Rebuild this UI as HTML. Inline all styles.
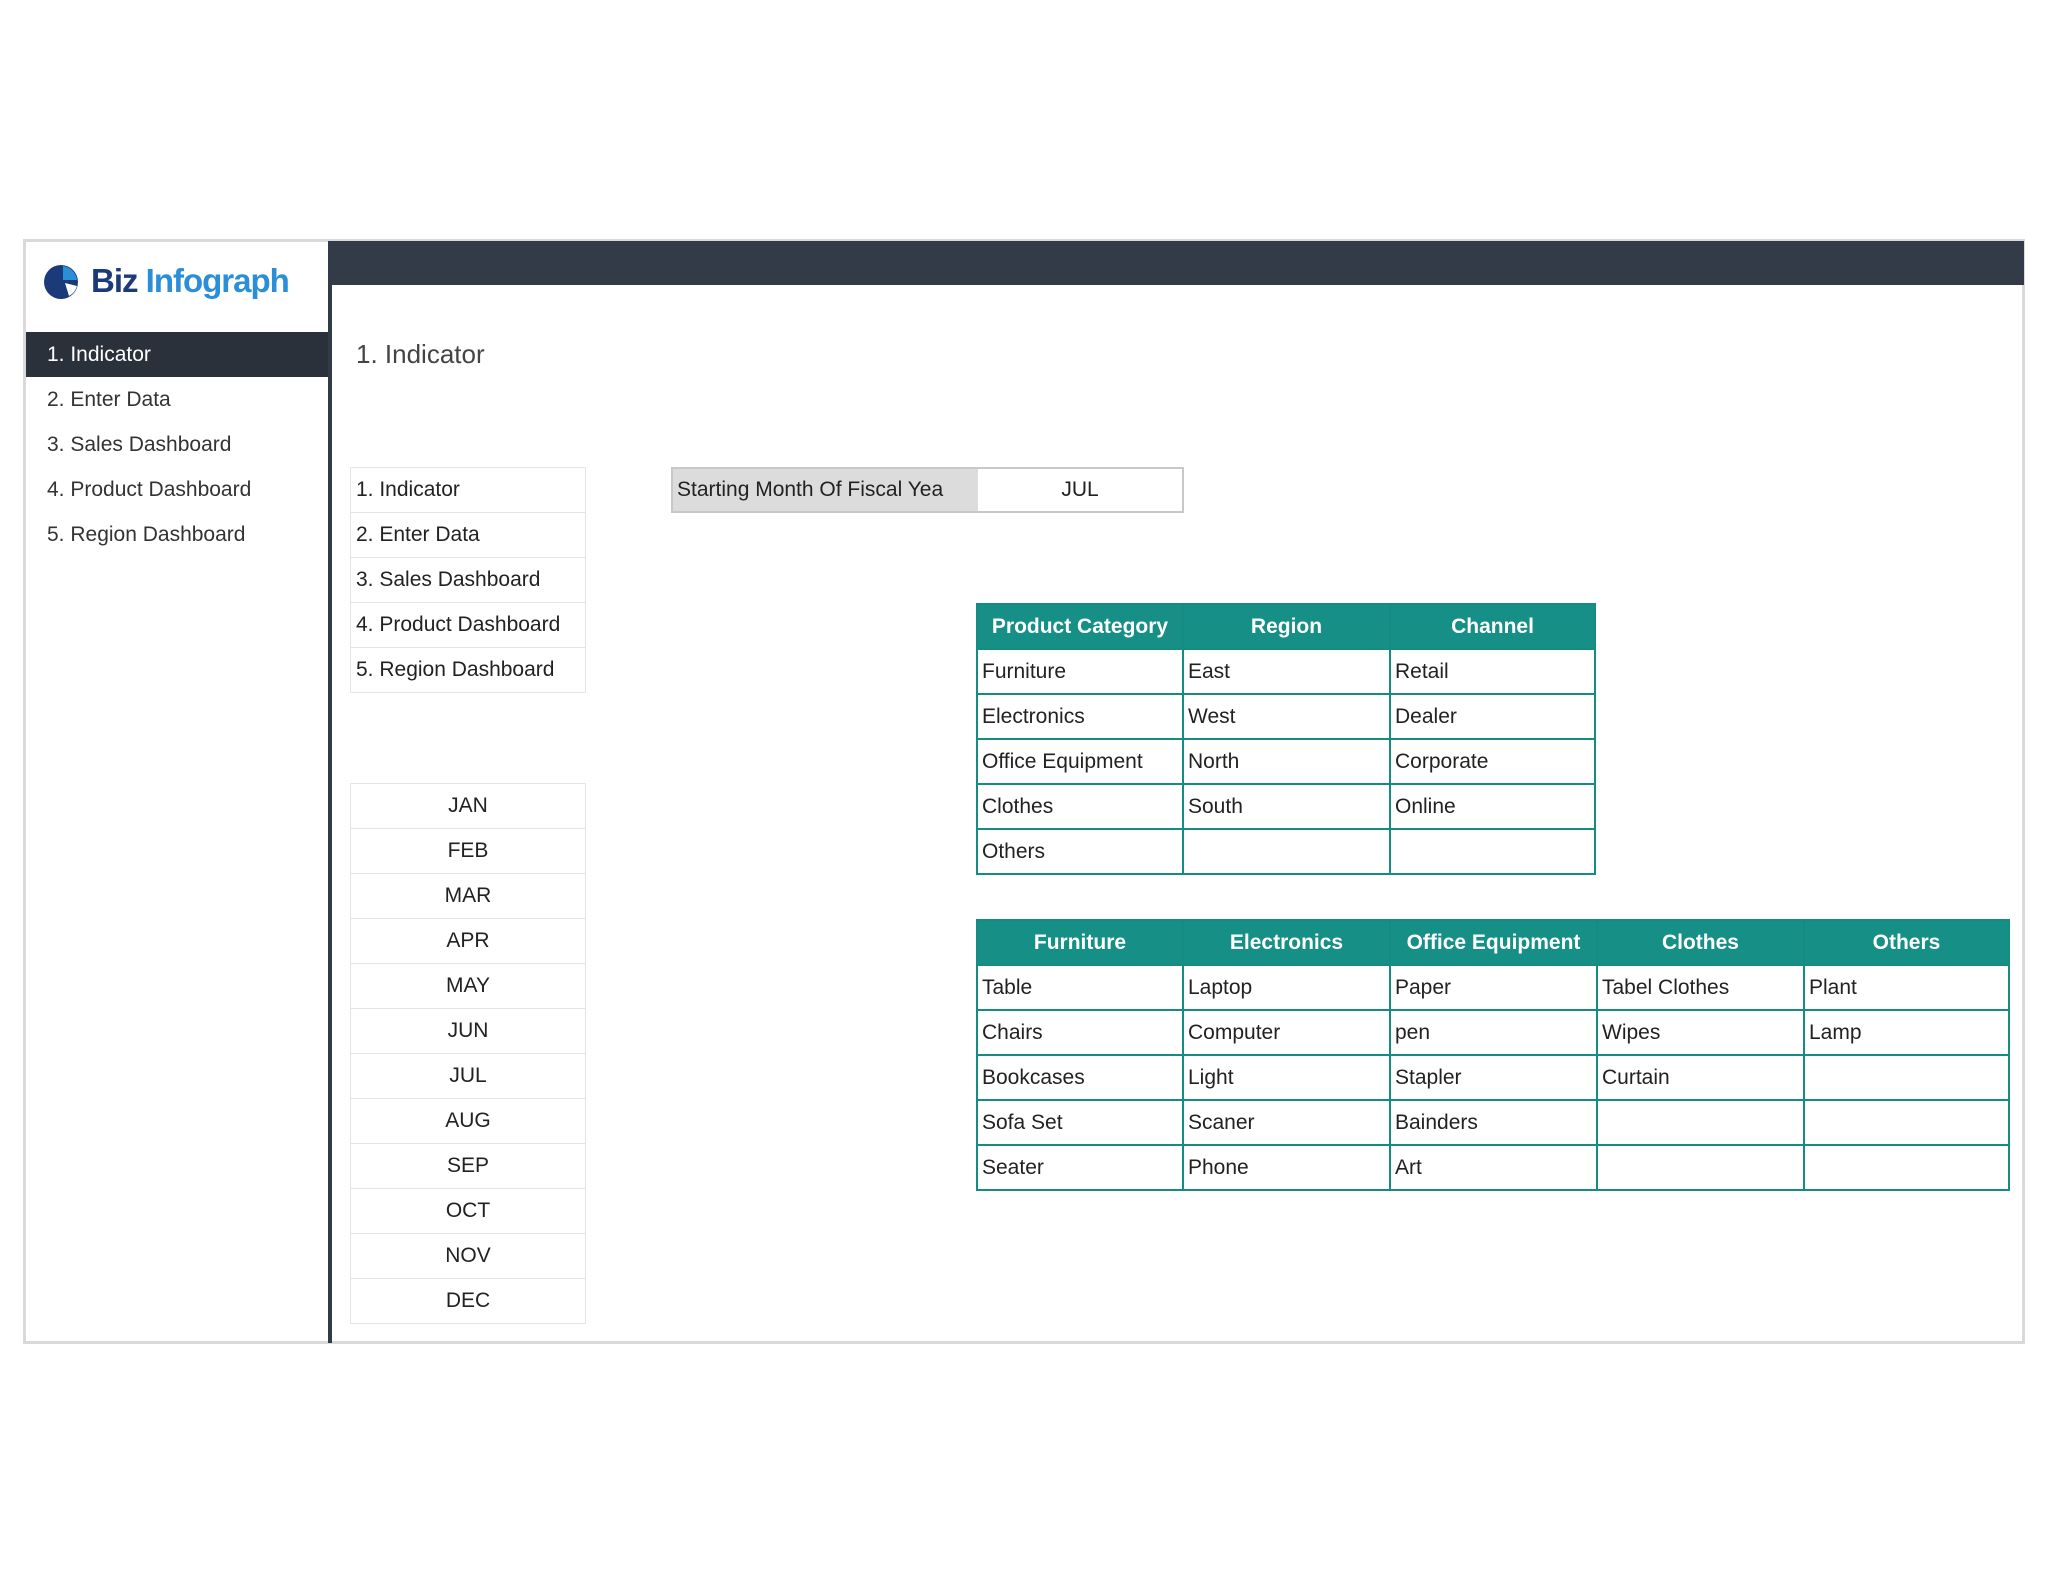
<!DOCTYPE html>
<html><head><style>
*{margin:0;padding:0;box-sizing:border-box}
body{width:2048px;height:1582px;background:#fff;position:relative;font-family:"Liberation Sans",sans-serif;color:#222;overflow:hidden}
.a{position:absolute}
.frame{left:23px;top:239px;width:2002px;height:1105px;border:3px solid #d9d9d9}
.topbar{left:330px;top:241px;width:1694px;height:44px;background:#333b48}
.vline{left:328px;top:241px;width:4px;height:1102px;background:#333b48}
.side{left:26px;width:302px;height:45px;font-size:21px;line-height:45px;padding-left:21px;color:#333}
.side.on{background:#2b313b;color:#fff}
.box{border:1px solid #e4e4e4;margin-top:-1px;height:46px;font-size:21px;line-height:44px;color:#222}
table{position:absolute;border-collapse:collapse;font-size:21px}
td,th{border:2px solid #148c82;height:45px;padding:0 4px;text-align:left;font-weight:normal;color:#222;white-space:nowrap}
th{background:#168f86;color:#fff;font-weight:bold;text-align:center}
</style></head><body>
<div class="a frame"></div>
<div class="a topbar"></div>
<div class="a vline"></div>
<svg class="a" style="left:43px;top:264px" width="38" height="36" viewBox="0 0 38 36"><circle cx="18" cy="18" r="17" fill="#1a3a7a"/><path d="M20 2 A16 16 0 0 1 34 16 L20 16Z" fill="#2a8fd6"/><path d="M22 19 L34 22 A16 16 0 0 1 26 32Z" fill="#fff"/></svg>
<div class="a" style="left:91px;top:262px;font-size:33px;font-weight:bold;letter-spacing:-1px"><span style="color:#1c3a78">Biz</span> <span style="color:#2a8ed8">Infograph</span></div>
<div class="a side on" style="top:332px">1. Indicator</div>
<div class="a side" style="top:377px">2. Enter Data</div>
<div class="a side" style="top:422px">3. Sales Dashboard</div>
<div class="a side" style="top:467px">4. Product Dashboard</div>
<div class="a side" style="top:512px">5. Region Dashboard</div>
<div class="a" style="left:356px;top:339px;font-size:26px;color:#444">1. Indicator</div>

<div class="a" style="left:350px;top:468px;width:236px">
<div class="box" style="padding-left:5px">1. Indicator</div>
<div class="box" style="padding-left:5px">2. Enter Data</div>
<div class="box" style="padding-left:5px">3. Sales Dashboard</div>
<div class="box" style="padding-left:5px">4. Product Dashboard</div>
<div class="box" style="padding-left:5px">5. Region Dashboard</div>
</div>

<div class="a" style="left:671px;top:467px;width:513px;height:46px;border:2px solid #c8c8c8;display:flex;font-size:21px;line-height:42px">
<div style="width:305px;background:#dcdcdc;padding-left:4px;white-space:nowrap;overflow:hidden">Starting Month Of Fiscal Yea</div>
<div style="flex:1;text-align:center">JUL</div>
</div>

<div class="a" style="left:350px;top:784px;width:236px;text-align:center">
<div class="box">JAN</div><div class="box">FEB</div><div class="box">MAR</div><div class="box">APR</div><div class="box">MAY</div><div class="box">JUN</div><div class="box">JUL</div><div class="box">AUG</div><div class="box">SEP</div><div class="box">OCT</div><div class="box">NOV</div><div class="box">DEC</div>
</div>

<table style="left:976px;top:603px;width:620px">
<tr><th style="width:206px">Product Category</th><th style="width:207px">Region</th><th>Channel</th></tr>
<tr><td>Furniture</td><td>East</td><td>Retail</td></tr>
<tr><td>Electronics</td><td>West</td><td>Dealer</td></tr>
<tr><td>Office Equipment</td><td>North</td><td>Corporate</td></tr>
<tr><td>Clothes</td><td>South</td><td>Online</td></tr>
<tr><td>Others</td><td></td><td></td></tr>
</table>

<table style="left:976px;top:919px;width:1034px">
<tr><th style="width:206px">Furniture</th><th style="width:207px">Electronics</th><th style="width:207px">Office Equipment</th><th style="width:207px">Clothes</th><th>Others</th></tr>
<tr><td>Table</td><td>Laptop</td><td>Paper</td><td>Tabel Clothes</td><td>Plant</td></tr>
<tr><td>Chairs</td><td>Computer</td><td>pen</td><td>Wipes</td><td>Lamp</td></tr>
<tr><td>Bookcases</td><td>Light</td><td>Stapler</td><td>Curtain</td><td></td></tr>
<tr><td>Sofa Set</td><td>Scaner</td><td>Bainders</td><td></td><td></td></tr>
<tr><td>Seater</td><td>Phone</td><td>Art</td><td></td><td></td></tr>
</table>
</body></html>
